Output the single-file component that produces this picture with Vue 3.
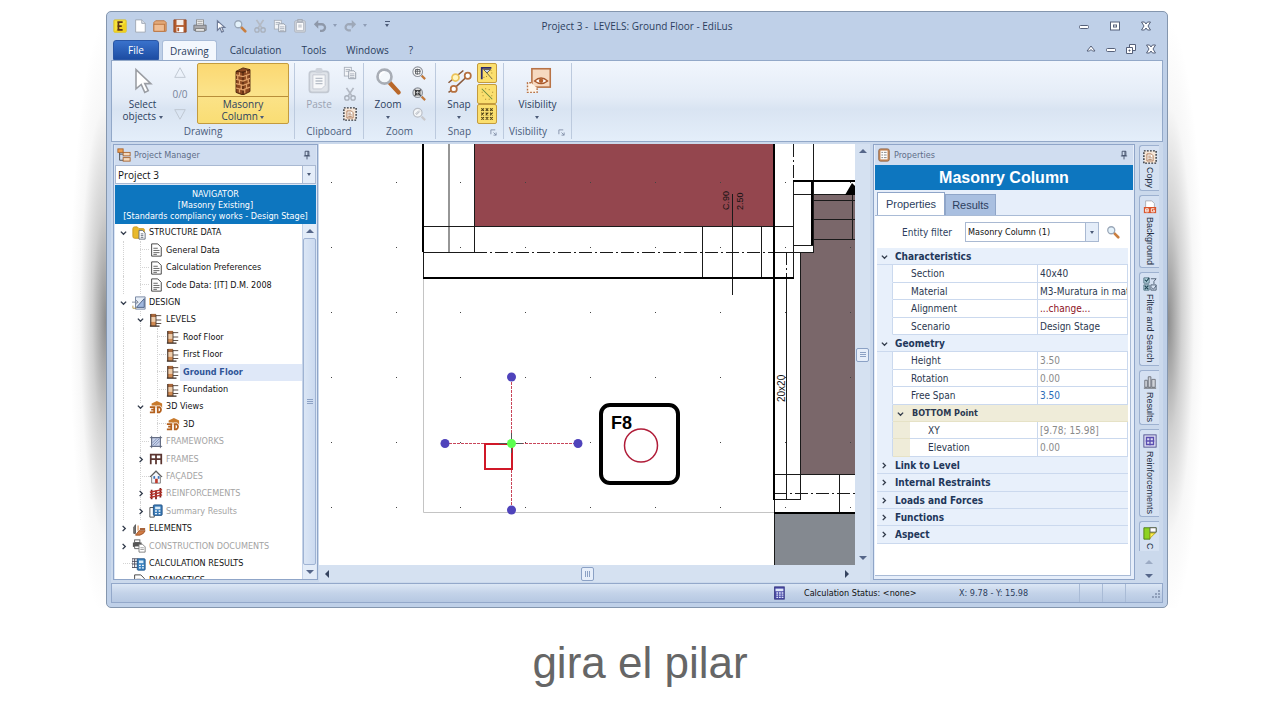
<script setup>
import { ref } from 'vue'

const icons = {
  logo: '<rect x="1" y="1" width="14" height="14" rx="1" fill="#f7e23c" stroke="#d9bd1a"/><path d="M1 15h14V3z" fill="#f0d020"/><path d="M5 3.500h6M5 8h5M5 12.500h6M6.200 3v10" stroke="#5d3414" stroke-width="2" fill="none"/>',
  page: '<path d="M3 1h7l4 4v10H3z" fill="#fff" stroke="#9aa3b0"/><path d="M10 1v4h4" fill="#dfe5ee" stroke="#9aa3b0"/>',
  folder: '<path d="M1 4l2-2h10l2 2v10H1z" fill="#e2a878" stroke="#b9713c"/><rect x="1" y="6" width="12" height="8" fill="#efbd93" stroke="#b9713c"/>',
  save: '<path d="M1 1h14v14H1z" fill="#b35a2c" stroke="#8f4520"/><rect x="4" y="1" width="8" height="6" fill="#f3ece8"/><rect x="4" y="9" width="8" height="6" fill="#fff"/><path d="M6 10v4" stroke="#b35a2c" stroke-width="2"/>',
  print: '<rect x="4" y="1" width="8" height="7" fill="#fff" stroke="#888"/><path d="M1 7h14v6H1z" fill="#a9a9ad" stroke="#6f7278"/><rect x="3" y="11" width="10" height="3" fill="#ececec" stroke="#777"/><path d="M5 3h6M5 5h6" stroke="#999"/>',
  cursor: '<path d="M5 2v11l3-3 2 5 2-1-2-4.500h3.500z" fill="#fff" stroke="#6d7a96" stroke-width="1.300"/>',
  glass: '<path d="M9 9l5 5" stroke="#c97e3f" stroke-width="3" stroke-linecap="round"/><circle cx="6" cy="6" r="4" fill="#e4f2fb" stroke="#9aa7b8" stroke-width="1.500"/>',
  cut: '<path d="M4 1l6 9M12 1L6 10" stroke="#b4bac4" stroke-width="2"/><circle cx="4.500" cy="12.500" r="2.500" fill="none" stroke="#a9b0bb" stroke-width="1.500"/><circle cx="11.500" cy="12.500" r="2.500" fill="none" stroke="#a9b0bb" stroke-width="1.500"/>',
  copy: '<rect x="1.500" y="1.500" width="8" height="10" fill="#f3f5f8" stroke="#a8afba"/><path d="M3 4h5M3 6h3" stroke="#a8afba"/><path d="M6.500 5.500h6l2 2v7h-8z" fill="#f3f5f8" stroke="#8f97a4"/><path d="M8 9h5M8 11h5M8 13h5" stroke="#a8afba"/>',
  paste: '<rect x="2" y="2" width="12" height="13" rx="1" fill="#d5d9df" stroke="#a9afb9"/><rect x="4" y="4" width="8" height="9" fill="#fbfbfc" stroke="#b7bcc6"/><rect x="5.500" y="0.500" width="5" height="3" fill="#c4c9d1" stroke="#a2a8b3"/><path d="M6 7h4M6 9h4" stroke="#a9afb9"/>',
  undo: '<path d="M5 6h5a3.500 3.500 0 0 1 0 7.500H8" fill="none" stroke="#8e98a9" stroke-width="2.600"/><path d="M6 1v10L1 6z" fill="#8e98a9"/>',
  redo: '<path d="M11 6H7a3.500 3.500 0 0 0-1 7h3" fill="none" stroke="#9ea8b8" stroke-width="2.600"/><path d="M10 1v10l5-5z" fill="#9ea8b8"/>',
  bigCursor: '<path d="M8 3v22l6-5 4 9 4-2-4-8h7z" fill="#fff" stroke="#9a9da3" stroke-width="1.800"/>',
  wall: '<path d="M8 5l8-4 8 2v25l-8 4-8-3z" fill="#8c4a22" stroke="#4d230c"/><path d="M16 5v27M8 5l8 1 8-3" stroke="#3d1906" fill="none"/><path d="M8 9l8 2 8-3M8 14l8 2 8-3M8 19l8 2 8-3M8 24l8 2 8-3M12 6v4M12 15v5M12 25v4M20 10v5M20 19v5M20 4v3M10 10v4M14 21v4M22 14v4M18 25v5" stroke="#e0a169" stroke-width="1.400" fill="none"/>',
  bigPaste: '<rect x="5" y="5" width="22" height="24" rx="3" fill="#dfe3e9" stroke="#c3c9d2" stroke-width="2"/><path d="M9 9h14v12l-4 4H9z" fill="#f7f8fa" stroke="#c2c7d0"/><rect x="12" y="1" width="8" height="6" rx="2" fill="#cfd4dc"/><path d="M12 13h8M12 16h8M12 19h8" stroke="#b8bec8" stroke-width="1.500"/>',
  copySel: '<rect x="1" y="1" width="14" height="14" fill="#f5e6d8" stroke="#30343c" stroke-width="1.600" stroke-dasharray="2 1.500"/><path d="M4.500 4.500h5l2 2v6h-7z" fill="#fff" stroke="#a8714b"/><path d="M6 7h3M6 9h4M6 11h4" stroke="#a8714b"/>',
  bigGlass: '<path d="M18 18l10 11" stroke="#b9682a" stroke-width="5" stroke-linecap="round"/><circle cx="12" cy="11" r="8" fill="#f4f8fb" stroke="#a8adb5" stroke-width="3"/><path d="M7 10a5 5 0 0 1 5-4" stroke="#fff" stroke-width="2" fill="none"/>',
  zoomBox: '<path d="M11 11l4 4" stroke="#c1793c" stroke-width="2.500"/><circle cx="6.500" cy="6.500" r="5.500" fill="#fff" stroke="#8e939c" stroke-width="1.300"/><path d="M4 4h5v5H4zM3 6h7M6 3v7" fill="none" stroke="#55585e" stroke-width="1"/>',
  zoomAll: '<path d="M11 11l4 4" stroke="#c1793c" stroke-width="2.500"/><circle cx="6.500" cy="6.500" r="5.500" fill="#ddd" stroke="#8e939c" stroke-width="1.300"/><path d="M3 3l3 3M10 3L7 6M3 10l3-3M10 10L7 7" stroke="#2e3034" stroke-width="1.200"/><rect x="4" y="4" width="5" height="5" fill="none" stroke="#333"/>',
  zoomPrev: '<path d="M11 11l4 4" stroke="#c9c9cc" stroke-width="2.500"/><circle cx="6.500" cy="6.500" r="5" fill="#f4f6f8" stroke="#b9bec6" stroke-width="1.300"/><path d="M4 8l4-4M5 9l4-4" stroke="#a8aeb8"/>',
  snap: '<path d="M4 18L21 4M10 25L26 10M4 29l6-4" stroke="#8a5a3c" stroke-width="1.800"/><circle cx="12" cy="12" r="4" fill="#fff6c0" stroke="#ecc35a" stroke-width="2"/><circle cx="26" cy="10" r="3.500" fill="#fff" stroke="#b5703f" stroke-width="2"/><circle cx="10" cy="25" r="3.500" fill="#fff" stroke="#b5703f" stroke-width="2"/>',
  snapA: '<path d="M2 15V2h11" stroke="#2c2a6e" stroke-width="2" fill="none"/><path d="M4 4h8L8 8zM7 7l7 8" fill="#c9d3e8" stroke="#55524a"/><path d="M12 5h1M13 8h1M7 12h1M4 13h1" stroke="#8a6d1c"/>',
  snapB: '<path d="M2 2l12 12" stroke="#6b8a3a" stroke-width="1.200"/><path d="M2 6h1M6 2h1M10 3h1M14 6h1M3 10h1M6 14h1M10 14h1M13 10h1" stroke="#8a6d1c" stroke-width="1"/>',
  snapC: '<path d="M1.500 1.500l3 3m0-3l-3 3M6.500 1.500l3 3m0-3l-3 3M11.500 1.500l3 3m0-3l-3 3M1.500 6.500l3 3m0-3l-3 3M6.500 6.500l3 3m0-3l-3 3M11.500 6.500l3 3m0-3l-3 3M1.500 11.500l3 3m0-3l-3 3M6.500 11.500l3 3m0-3l-3 3M11.500 11.500l3 3m0-3l-3 3" fill="none" stroke="#4a3c14" stroke-width="1.200"/>',
  visibility: '<rect x="9" y="2" width="21" height="21" fill="#f6d9c0" stroke="#b87346" stroke-width="1.800"/><path d="M8 18H4v11h11v-5" fill="#fdf4ea" stroke="#b87346" stroke-width="1.600" stroke-dasharray="2 1.600"/><path d="M12 16q7.500-7 15 0q-7.500 6-15 0z" fill="#fff" stroke="#a9592c" stroke-width="1.500"/><circle cx="19.500" cy="15.700" r="2.500" fill="#b5622f"/>',
  manager: '<path d="M3 5v9h4M3 7h4" stroke="#444" fill="none"/><rect x="1" y="1" width="6" height="4" fill="#f0a050" stroke="#a4602a"/><rect x="7" y="5" width="8" height="4" fill="#f7d9bb" stroke="#a4602a"/><rect x="7" y="11" width="8" height="4" fill="#f7d9bb" stroke="#a4602a"/>',
  pin: '<path d="M5 2h6v7H5zM3 9.500h10M8 10v5M9.500 2v7" fill="none" stroke="#3f4c66" stroke-width="1.400"/>',
  structure: '<path d="M1 3q0-2 2-2h3l2 2h5q1 0 1 1v9q0 1-1 1H3q-2 0-2-2z" fill="#e8b92d" stroke="#c7951a"/><path d="M8 5h4l3 3v7H8z" fill="#fff" stroke="#5a6474"/><path d="M10 9h3M10 11h3M10 13h3" stroke="#5a6474"/>',
  doc: '<path d="M3 1h7l4 4v10H3z" fill="#fff" stroke="#333"/><path d="M5 6h5M5 8.500h7M5 11h7M5 13h4" stroke="#555"/>',
  design: '<path d="M4 1h11v14H4z" fill="#e6edf7" stroke="#6e7f9c"/><path d="M5 13L14 3v10z" fill="#9fb7de" stroke="#44587d"/><path d="M0 7h7M4 4l3 3-3 3" stroke="#7b8494" fill="none"/><path d="M1 11v3h4" stroke="#b39347" fill="none"/>',
  level: '<path d="M2 1h6v4H2z" fill="#a8683c"/><path d="M2 5h6v5H2z" fill="#f0cda9"/><path d="M2 10h6v5H2z" fill="#d08a52"/><path d="M2 1v14M1 15h11" stroke="#3a2a20" stroke-width="1.200" fill="none"/><path d="M8 2v13M8 3h6M8 8h6M8 12h6" stroke="#4a3a30" fill="none"/>',
  d3: '<path d="M3 4l6-3 6 3v5H3z" fill="#c87a2c"/><path d="M1 8h5v6H1M2.500 11H6M10 8v6h2q3.500-3 0-6z" fill="#fff" stroke="#fff" stroke-width="3.500"/><path d="M1 8h5v6H1M2.500 11H6M10 8v6h2q3.500-3 0-6z" fill="none" stroke="#b4601c" stroke-width="2"/>',
  framework: '<path d="M3 3h10v10H3z" fill="#c9d3ea" stroke="#6d7b9b"/><path d="M3 1v14M13 1v14M1 3h14M1 13h14" stroke="#5b6478"/><path d="M4 9l5-5M4 12l8-8M7 12l5-5" stroke="#7c8db5"/>',
  frames: '<path d="M2 2v12M8 2v12M14 2v12M1 3h14M2 8h12" stroke="#5a3530" stroke-width="2" fill="none"/>',
  facade: '<path d="M1 8l7-7 7 7" stroke="#444" stroke-width="1.200" fill="none"/><path d="M3 7l5-5 5 5v8H3z" fill="#f3f6fb" stroke="#777"/><rect x="5" y="7" width="2" height="3" fill="#3a71b8"/><rect x="10" y="7" width="2" height="3" fill="#3a71b8"/><rect x="7" y="10" width="3" height="5" fill="#c0392b"/>',
  reinf: '<path d="M3 3v11M8 4v10M13 1v11" stroke="#7b1d18" stroke-width="2"/><path d="M1 6l14-3M1 9l14-3M1 12l14-3" stroke="#b8352c" stroke-width="1.600"/>',
  summary: '<path d="M1 4h5v11H1z" fill="#fff" stroke="#444"/><rect x="5" y="1" width="10" height="12" rx="1" fill="#3b7cb8" stroke="#204f82"/><path d="M7 3h6v3H7z" fill="#d9ecfa"/><path d="M7 8h2M11 8h2M7 11h2M11 11h2" stroke="#fff" stroke-width="1.500"/>',
  elements: '<path d="M2 13V6l2-3v10z" fill="#777" stroke="#555"/><path d="M4 15l4-5h7l-2 3-4 2z" fill="#d27d45" stroke="#9a4d20"/><path d="M6 4h2v6H6z" fill="#e6b48c"/><path d="M9 8h6" stroke="#9a4d20" stroke-width="2"/>',
  construct: '<rect x="3" y="1" width="6" height="3" fill="#fff" stroke="#555"/><rect x="1" y="4" width="10" height="5" fill="#555"/><path d="M3 8h6v3H3z" fill="#fff" stroke="#555"/><path d="M8 6h4l3 3v6H8z" fill="#fff" stroke="#777"/><path d="M9.500 10h4M9.500 12h4" stroke="#999"/>',
  calc: '<path d="M0 2h7v10H0zM0 5h7M0 8h7M3 2v10" fill="#fff" stroke="#445"/><rect x="6" y="2" width="9" height="13" rx="1" fill="#3b83c0" stroke="#1f5288"/><path d="M8 4h5v3H8z" fill="#d9ecfa"/><path d="M8 9.500h2M11.500 9.500h2M8 12.500h2M11.500 12.500h2" stroke="#fff" stroke-width="1.500"/>',
  props: '<rect x="2" y="1" width="12" height="14" rx="2" fill="#c98b5a" stroke="#8d6244"/><rect x="4" y="3" width="8" height="10" fill="#fff"/><path d="M5 5h2M5 8h2M5 11h2M8 5h3M8 8h3M8 11h3" stroke="#777"/>',
  bg: '<path d="M3 1h7l3 3v8H3z" fill="#fff" stroke="#a9a9b0"/><rect x="1" y="8" width="14" height="7" fill="#d9542b"/><path d="M3 10h3v3.500H3zM3 11.700h3M13 10H9.500v3.500H13v-1.700h-1.500" stroke="#fff" fill="none"/>',
  filter: '<path d="M1 1h6v6H1zM1 9h6v6H1z" fill="#bfe0ea" stroke="#4a6a7a"/><path d="M2 3l2 2 3-4M2 10l4 4M6 10l-4 4" stroke="#274b59" stroke-width="1.300" fill="none"/><path d="M9 2h6l-2.500 3v3M9 9h6v6H9zM10 12l2 2 3-4" stroke="#47586d" fill="none"/>',
  results: '<path d="M2 14V6h3v8zM6 14V2h3v12zM10 14V5h4v9z" fill="#cfd2d8" stroke="#6b6f77"/><path d="M1 15h14" stroke="#555"/>',
  rebar: '<rect x="1" y="1" width="14" height="14" fill="#dcdcf2" stroke="#4a4a8c"/><path d="M4 4h8v8H4zM8 3v10M3 8h10" fill="none" stroke="#5a4db0" stroke-width="1.500"/>',
  green: '<path d="M1 2h14v5H8v8H1z" fill="#8ed322" stroke="#4c7a12"/><path d="M8 2h7v5H8z" fill="#fff" stroke="#555"/><path d="M8 14V8h6z" fill="#fff04a" stroke="#a79a20"/>',
  statCalc: '<rect x="3" y="1" width="11" height="14" fill="#4a4aa8" stroke="#33337d"/><rect x="4" y="3" width="9" height="3" fill="#dfe6fa"/><path d="M5 8h8M5 10.500h8M5 13h8" stroke="#dfe6fa" stroke-width="1.500" stroke-dasharray="2 1"/>'
}

const closePath = 'M1.500 2h3L6 4l1.500-2h3L8 6l2.500 4h-3L6 8l-1.500 2h-3L4 6z'

const quick = [
  ['page', 'New'], ['folder', 'Open'], ['save', 'Save'], ['print', 'Print'], ['cursor', 'Select'],
  ['glass', 'Find'], ['cut', 'Cut'], ['copy', 'Copy'], ['paste', 'Paste']
]
const menu = ['Calculation', 'Tools', 'Windows', '?']

const tree = [
  { l: 0, e: 'open', i: 'structure', t: 'STRUCTURE DATA' },
  { l: 1, i: 'doc', t: 'General Data' },
  { l: 1, i: 'doc', t: 'Calculation Preferences' },
  { l: 1, i: 'doc', t: 'Code Data: [IT] D.M. 2008' },
  { l: 0, e: 'open', i: 'design', t: 'DESIGN' },
  { l: 1, e: 'open', i: 'level', t: 'LEVELS' },
  { l: 2, i: 'level', t: 'Roof Floor' },
  { l: 2, i: 'level', t: 'First Floor' },
  { l: 2, i: 'level', t: 'Ground Floor', sel: true },
  { l: 2, i: 'level', t: 'Foundation' },
  { l: 1, e: 'open', i: 'd3', t: '3D Views' },
  { l: 2, i: 'd3', t: '3D' },
  { l: 1, i: 'framework', t: 'FRAMEWORKS', dim: true },
  { l: 1, e: 'shut', i: 'frames', t: 'FRAMES', dim: true },
  { l: 1, i: 'facade', t: 'FAÇADES', dim: true },
  { l: 1, e: 'shut', i: 'reinf', t: 'REINFORCEMENTS', dim: true },
  { l: 1, e: 'shut', i: 'summary', t: 'Summary Results', dim: true },
  { l: 0, e: 'shut', i: 'elements', t: 'ELEMENTS' },
  { l: 0, e: 'shut', i: 'construct', t: 'CONSTRUCTION DOCUMENTS', dim: true },
  { l: 0, i: 'calc', t: 'CALCULATION RESULTS' },
  { l: 0, i: 'doc', t: 'DIAGNOSTICS' }
]

const rows = [
  { k: 'group', open: true, t: 'Characteristics' },
  { k: 'prop', t: 'Section', v: '40x40' },
  { k: 'prop', t: 'Material', v: 'M3-Muratura in mattoni' },
  { k: 'prop', t: 'Alignment', v: '...change...', c: 'wine' },
  { k: 'prop', t: 'Scenario', v: 'Design Stage' },
  { k: 'group', open: true, t: 'Geometry' },
  { k: 'prop', t: 'Height', v: '3.50', c: 'gray' },
  { k: 'prop', t: 'Rotation', v: '0.00', c: 'gray' },
  { k: 'prop', t: 'Free Span', v: '3.50', c: 'blue' },
  { k: 'subgroup', open: true, t: 'BOTTOM Point' },
  { k: 'nested', t: 'XY', v: '[9.78; 15.98]', c: 'gray' },
  { k: 'nested', t: 'Elevation', v: '0.00', c: 'gray' },
  { k: 'group', t: 'Link to Level' },
  { k: 'group', t: 'Internal Restraints' },
  { k: 'group', t: 'Loads and Forces' },
  { k: 'group', t: 'Functions' },
  { k: 'group', t: 'Aspect' }
]

const sideTabs = [
  ['copySel', 'Copy'], ['bg', 'Background'], ['filter', 'Filter and Search'],
  ['results', 'Results'], ['rebar', 'Reinforcements']
]

const gridX = [331, 396, 460, 525, 590, 655, 720, 785, 850]
const gridY = [182, 247, 312, 377, 442, 507]
const dashes = Array.from({ length: 33 }, (_, n) => n * 4)
const project = ref('Project 3')
const entity = ref('Masonry Column (1)')
</script>

<template>
  <div class="page">
    <div class="stage">
      <div class="window">
        <header class="titlebar">
          <svg class="i14" viewBox="0 0 16 16" v-html="icons.logo"></svg>
          <button v-for="q in quick" :key="q[0]" class="qb" :aria-label="q[1]">
            <svg class="i14" viewBox="0 0 16 16" v-html="icons[q[0]]"></svg>
          </button>
          <button class="qb" aria-label="Undo"><svg class="i14" viewBox="0 0 16 16" v-html="icons.undo"></svg></button>
          <i class="caret faint"></i>
          <button class="qb" aria-label="Redo"><svg class="i14" viewBox="0 0 16 16" v-html="icons.redo"></svg></button>
          <i class="caret faint"></i>
          <i class="caret bar"></i>
          <h1 class="title">Project 3 -&nbsp; LEVELS: Ground Floor - EdiLus</h1>
          <div class="winbtns">
            <button aria-label="Minimize"><svg viewBox="0 0 12 12"><rect x="1.500" y="5.500" width="9" height="3" rx="1" fill="#fff" stroke="#56617a" /></svg></button>
            <button aria-label="Maximize"><svg viewBox="0 0 12 12"><rect x="1.500" y="2" width="9" height="8" fill="#fff" stroke="#56617a" /><rect x="4.500" y="5" width="3" height="2" fill="#fff" stroke="#56617a" /></svg></button>
            <button aria-label="Close"><svg viewBox="0 0 12 12"><path :d="closePath" fill="#fff" stroke="#56617a" /></svg></button>
          </div>
        </header>

        <nav class="menubar">
          <button class="file">File</button>
          <button class="tab on">Drawing</button>
          <button v-for="m in menu" :key="m" class="tab">{{ m }}</button>
          <div class="mdibtns">
            <button aria-label="Collapse ribbon"><svg viewBox="0 0 12 12"><path d="M2 8l4-5 4 5H7.500L6 6.500 4.500 8z" fill="#fff" stroke="#56617a" /></svg></button>
            <button aria-label="Minimize view"><svg viewBox="0 0 12 12"><rect x="1.500" y="5.500" width="9" height="3" rx="1" fill="#fff" stroke="#56617a" /></svg></button>
            <button aria-label="Restore view"><svg viewBox="0 0 12 12"><path d="M4.500 1.500h6v6h-6z" fill="#fff" stroke="#56617a" /><path d="M1.500 4.500h6v6h-6z" fill="#fff" stroke="#56617a" /><path d="M4 7h1v1H4z" stroke="#56617a" /></svg></button>
            <button aria-label="Close view"><svg viewBox="0 0 12 12"><path :d="closePath" fill="#fff" stroke="#56617a" /></svg></button>
          </div>
        </nav>

        <section class="ribbon">
          <div class="group g-draw">
            <div class="tools">
              <button class="big w60"><svg class="i28" viewBox="0 0 32 32" v-html="icons.bigCursor"></svg><span>Select<br>objects <i class="caret"></i></span></button>
              <div class="stack">
                <button aria-label="Previous"><svg class="i14" viewBox="0 0 16 16"><path d="M2 13L8 2l6 11z" fill="none" stroke="#bcc3ce" /></svg></button>
                <span class="count">0/0</span>
                <button aria-label="Next"><svg class="i14" viewBox="0 0 16 16"><path d="M2 3l6 11 6-11z" fill="none" stroke="#bcc3ce" /></svg></button>
              </div>
              <button class="big hot"><svg class="i28" viewBox="0 0 32 32" v-html="icons.wall"></svg><span>Masonry<br>Column <i class="caret"></i></span></button>
            </div>
            <div class="glabel">Drawing</div>
          </div>
          <div class="group g-clip">
            <div class="tools">
              <button class="big w46 off"><svg class="i28" viewBox="0 0 32 32" v-html="icons.bigPaste"></svg><span>Paste</span></button>
              <div class="stack">
                <button aria-label="Copy"><svg class="i14" viewBox="0 0 16 16" v-html="icons.copy"></svg></button>
                <button aria-label="Cut"><svg class="i14" viewBox="0 0 16 16" v-html="icons.cut"></svg></button>
                <button aria-label="Copy selection"><svg class="i14" viewBox="0 0 16 16" v-html="icons.copySel"></svg></button>
              </div>
            </div>
            <div class="glabel">Clipboard</div>
          </div>
          <div class="group g-zoom">
            <div class="tools">
              <button class="big w46"><svg class="i28" viewBox="0 0 32 32" v-html="icons.bigGlass"></svg><span>Zoom<br><i class="caret"></i></span></button>
              <div class="stack">
                <button aria-label="Zoom window"><svg class="i14" viewBox="0 0 16 16" v-html="icons.zoomBox"></svg></button>
                <button aria-label="Zoom extents"><svg class="i14" viewBox="0 0 16 16" v-html="icons.zoomAll"></svg></button>
                <button aria-label="Zoom previous"><svg class="i14" viewBox="0 0 16 16" v-html="icons.zoomPrev"></svg></button>
              </div>
            </div>
            <div class="glabel">Zoom</div>
          </div>
          <div class="group g-snap">
            <div class="tools">
              <button class="big w40"><svg class="i28" viewBox="0 0 32 32" v-html="icons.snap"></svg><span>Snap<br><i class="caret"></i></span></button>
              <div class="stack snaps">
                <button aria-label="Object snap"><svg class="i14" viewBox="0 0 16 16" v-html="icons.snapA"></svg></button>
                <button aria-label="Grid line snap"><svg class="i14" viewBox="0 0 16 16" v-html="icons.snapB"></svg></button>
                <button aria-label="Grid snap"><svg class="i14" viewBox="0 0 16 16" v-html="icons.snapC"></svg></button>
              </div>
            </div>
            <div class="glabel launch">Snap<svg viewBox="0 0 8 8"><path d="M1 6V1h5M7 4v3H4M4 4l3 3" fill="none" stroke="#7f8da6" /></svg></div>
          </div>
          <div class="group g-vis">
            <div class="tools">
              <button class="big w66"><svg class="i28" viewBox="0 0 32 32" v-html="icons.visibility"></svg><span>Visibility<br><i class="caret"></i></span></button>
            </div>
            <div class="glabel launch">Visibility<svg viewBox="0 0 8 8"><path d="M1 6V1h5M7 4v3H4M4 4l3 3" fill="none" stroke="#7f8da6" /></svg></div>
          </div>
        </section>

        <main class="work">
          <aside class="manager">
            <div class="phead"><svg class="i14" viewBox="0 0 16 16" v-html="icons.manager"></svg><span>Project Manager</span><svg class="pin" viewBox="0 0 16 16" v-html="icons.pin"></svg></div>
            <div class="combo proj">
              <select v-model="project" aria-label="Project"><option>Project 3</option></select><i class="drop"><i class="caret"></i></i>
            </div>
            <div class="navi">NAVIGATOR<br>[Masonry Existing]<br>[Standards compliancy works - Design Stage]</div>
            <div class="treebox">
              <ul class="tree">
                <li v-for="n in tree" :key="n.t" :class="{ dim: n.dim, sel: n.sel }">
                  <span v-for="g in n.l" :key="g" class="guide"></span>
                  <span class="exp" :class="{ line: n.l > 0, tick: !n.e }">
                    <button v-if="n.e" :aria-label="'Toggle ' + n.t"><svg viewBox="0 0 8 8"><path :d="n.e === 'open' ? 'M1 3l3 3 3-3' : 'M3 1l3 3-3 3'" fill="none" stroke="#333c4c" stroke-width="1.600" /></svg></button>
                  </span>
                  <svg class="i14" viewBox="0 0 16 16" v-html="icons[n.i]"></svg>
                  <span class="tt">{{ n.t }}</span>
                </li>
              </ul>
              <div class="vbar"><button aria-label="Scroll up"><i class="tri up"></i></button><div class="thumb"><i class="grip"></i></div><button aria-label="Scroll down"><i class="tri down"></i></button></div>
            </div>
          </aside>

          <section class="view">
            <svg class="plan" viewBox="319 144 536 421" preserveAspectRatio="xMinYMin slice">
              <rect x="319" y="144" width="2000" height="1000" fill="#fff" />
              <rect x="474" y="144" width="300" height="82" fill="#94464e" />
              <path d="M800 252h13v-58h42v280h-55z" fill="#7a676a" />
              <rect x="774" y="513" width="81" height="60" fill="#848990" />
              <g fill="#444"><template v-for="x in gridX" :key="x"><rect v-for="y in gridY" :key="y" :x="x" :y="y" width="1" height="1" /></template></g>
              <path d="M423.500 279v233.500H774" stroke="#c4c4c4" fill="none" />
              <path d="M449 144v108" stroke="#969696" stroke-width="2" />
              <g stroke="#1a1a1a" fill="none">
                <path d="M474.500 144v108M423.500 252v26M423 226.500h370M423 252.500h51M702.500 227v51M761.500 227v51M732.500 194v101" />
                <path d="M793.500 180v98M813.500 144v108M793 194.500h62M793 245.500h20M774 252.500h40M813 200.500h42M813 219.500h42M813 239.500h42M852.500 185v54" />
                <path d="M786.500 278v222M800.500 252v248M774 474.500h81M774 499.500h27M839.500 474v39M774.500 500v65" />
                <path d="M474 252.500h300M774 493.500h81M786.500 252v26M793.500 144v36" stroke-dasharray="13 3 2 3" />
              </g>
              <path d="M423 144v108M423 278h371M774 144v356M793 181h62M812 181v64M774 513h81" stroke="#000" stroke-width="2" fill="none" />
              <path d="M852 183l-7 12h10v-9z" />
              <g class="cad">
                <text transform="translate(729 210) rotate(-90)" font-size="9">C.90</text>
                <text transform="translate(743 210) rotate(-90)" font-size="9">2.50</text>
                <text transform="translate(785 402) rotate(-90)" font-size="10">20x20</text>
              </g>
              <g fill="#c8465a">
                <template v-for="d in dashes" :key="d">
                  <rect :x="445 + d" y="443" width="3" height="1" />
                  <rect x="511" :y="378 + d" width="1" height="3" />
                </template>
              </g>
              <rect x="485" y="444" width="27" height="25" fill="none" stroke="#d01828" stroke-width="2" />
              <path d="M499 443.500h24M511.500 433v20" fill="none" stroke="#555" />
              <g fill="#4f43bb"><circle cx="511.500" cy="377" r="4.500" /><circle cx="511.500" cy="510" r="4.500" /><circle cx="445" cy="443.500" r="4.500" /><circle cx="578" cy="443.500" r="4.500" /></g>
              <circle cx="511.500" cy="443.500" r="4.500" fill="#5cff4e" />
              <rect x="601" y="405" width="77" height="78" rx="9" fill="#fff" stroke="#000" stroke-width="4" />
              <text class="key" x="611" y="429" font-size="18">F8</text>
              <circle cx="641" cy="445.500" r="16.500" fill="none" stroke="#b01c38" stroke-width="1.500" />
            </svg>
            <div class="vscroll"><button aria-label="Scroll view up"><i class="tri up"></i></button><i class="knob"><i class="grip"></i></i><button aria-label="Scroll view down"><i class="tri down"></i></button></div>
            <div class="hscroll"><button aria-label="Scroll view left"><i class="tri left"></i></button><i class="knob"><i class="grip side-grip"></i></i><button aria-label="Scroll view right"><i class="tri right"></i></button></div>
          </section>

          <aside class="props">
            <div class="phead"><svg class="i14" viewBox="0 0 16 16" v-html="icons.props"></svg><span>Properties</span><svg class="pin" viewBox="0 0 16 16" v-html="icons.pin"></svg></div>
            <h2>Masonry Column</h2>
            <div class="ptabs"><button class="on">Properties</button><button>Results</button></div>
            <div class="pbody">
              <div class="filter">
                <label for="entity">Entity filter</label>
                <div class="combo ent"><select id="entity" v-model="entity"><option>Masonry Column (1)</option></select><i class="drop"><i class="caret"></i></i></div>
                <button aria-label="Find entity" class="qb"><svg class="i14" viewBox="0 0 16 16" v-html="icons.glass"></svg></button>
              </div>
              <table>
                <colgroup><col class="c1"><col class="c2"><col class="c3"><col></colgroup>
                <tbody>
                  <tr v-for="r in rows" :key="r.t" :class="r.k">
                    <template v-if="r.k === 'group'">
                      <td class="tg"><button :aria-label="'Toggle ' + r.t"><svg viewBox="0 0 8 8"><path :d="r.open ? 'M1 3l3 3 3-3' : 'M2 1l3 3-3 3'" fill="none" stroke="#333c4c" stroke-width="1.600" /></svg></button></td>
                      <th colspan="3">{{ r.t }}</th>
                    </template>
                    <template v-else-if="r.k === 'subgroup'">
                      <td class="gut"></td>
                      <td class="tg"><button :aria-label="'Toggle ' + r.t"><svg viewBox="0 0 8 8"><path d="M1 3l3 3 3-3" fill="none" stroke="#333c4c" stroke-width="1.600" /></svg></button></td>
                      <th colspan="2">{{ r.t }}</th>
                    </template>
                    <template v-else>
                      <td class="gut"></td>
                      <td v-if="r.k === 'nested'" class="beige"></td>
                      <td class="name" :colspan="r.k === 'nested' ? 1 : 2">{{ r.t }}</td>
                      <td class="val" :class="r.c">{{ r.v }}</td>
                    </template>
                  </tr>
                </tbody>
              </table>
            </div>
          </aside>

          <nav class="side">
            <button v-for="s in sideTabs" :key="s[1]" class="stab"><svg class="i14" viewBox="0 0 16 16" v-html="icons[s[0]]"></svg><span>{{ s[1] }}</span></button>
            <button class="stab last"><svg class="i14" viewBox="0 0 16 16" v-html="icons.green"></svg><span>C</span></button>
            <div class="sarrows"><i class="tri up pale"></i><i class="tri down"></i></div>
          </nav>
        </main>

        <footer class="status">
          <svg class="i14" viewBox="0 0 16 16" v-html="icons.statCalc"></svg>
          <span class="calc">Calculation Status: &lt;none&gt;</span>
          <span class="xy">X: 9.78 - Y: 15.98</span>
          <span class="cell"></span><span class="cell"></span><span class="cell"></span>
          <svg class="size" viewBox="0 0 10 10"><path d="M8 1h2M8 4h2M8 7h2M5 4h2M5 7h2M2 7h2" stroke="#8f9fba" stroke-width="2" /></svg>
        </footer>
      </div>
    </div>
    <p class="caption">gira el pilar</p>
  </div>
</template>

<style>
body { background: #fff; }
</style>

<style scoped>
* { box-sizing: border-box; }
.page { height: 100vh; min-height: 480px; display: flex; flex-direction: column; padding-top: 11px; font-family: "Open Sans", "Noto Sans", sans-serif; font-size: 10px; color: #2c3e5e; }
button { font: inherit; color: inherit; background: none; border: 0; padding: 0; margin: 0; display: flex; align-items: center; justify-content: center; }
svg { display: block; flex: none; }
.i14 { width: 14px; height: 14px; }
.i28 { width: 28px; height: 28px; }
.stage { flex: 1; min-height: 0; margin: 0 112px 0 106px; position: relative; }
.stage::before, .stage::after { content: ""; position: absolute; top: 0; bottom: 0; width: 36px; }
.stage::before { right: 100%; background: radial-gradient(ellipse 100% 50% at 100% 52%, rgba(70,70,70,.62), rgba(90,90,90,.28) 38%, rgba(120,120,120,.06) 72%, transparent); }
.stage::after { left: 100%; background: radial-gradient(ellipse 100% 50% at 0 52%, rgba(70,70,70,.62), rgba(90,90,90,.28) 38%, rgba(120,120,120,.06) 72%, transparent); }
.window { height: 100%; display: flex; flex-direction: column; background: #bfd0e8; border: 1px solid #8496ae; border-radius: 5px; padding: 0 4px 4px; }

.titlebar { height: 27px; display: flex; align-items: center; gap: 6px; padding-left: 2px; position: relative; flex: none; }
.qb { width: 14px; height: 14px; }
.title { position: absolute; left: 0; right: 0; text-align: center; margin: 0; font-size: 10px; font-weight: 400; pointer-events: none; }
.winbtns, .mdibtns { margin-left: auto; display: flex; align-items: center; }
.winbtns { gap: 19px; padding-right: 11px; }
.mdibtns { gap: 8px; padding: 0 6px 5px 0; }
.winbtns svg, .mdibtns svg { width: 12px; height: 12px; }
.caret { display: inline-block; width: 0; height: 0; border: 2px solid transparent; border-top: 3px solid #4c5b78; border-bottom: 0; vertical-align: middle; }
.caret.faint { border-top-color: #8f9db5; }
.caret.bar { margin-left: 12px; position: relative; }
.caret.bar::before { content: ""; position: absolute; left: -2px; top: -6px; width: 5px; height: 1px; background: #4c5b78; }

.menubar { height: 21px; display: flex; flex: none; padding-left: 2px; align-items: flex-end; }
.tab { padding: 0 10px; height: 21px; }
.tab.on { background: #f3f7fd; border: 1px solid #a9bcd8; border-bottom: 0; border-radius: 3px 3px 0 0; padding: 0 7px; margin: 0 3px; height: 20px; }
.file { width: 46px; height: 20px; background: linear-gradient(#3a72cc, #1d4da3); color: #fff; border-radius: 3px 3px 0 0; border: 1px solid #2a56a5; }

.ribbon { height: 82px; flex: none; display: flex; background: linear-gradient(#f1f6fd, #e4ecf7 45%, #d9e4f2 60%, #e4eefa); border: 1px solid #92a8c8; padding-top: 2px; }
.group { border-right: 1px solid #bccade; margin-bottom: 2px; display: flex; flex-direction: column; }
.g-draw { width: 183px; } .g-clip { width: 69px; } .g-zoom { width: 72px; } .g-snap { width: 68px; } .g-vis { width: 68px; }
.tools { display: flex; flex: 1; }
.glabel { height: 16px; line-height: 14px; text-align: center; color: #4a5c7c; }
.launch { display: flex; justify-content: flex-end; gap: 19px; padding-right: 6px; }
.g-vis .launch { gap: 11px; }
.launch svg { width: 7px; height: 7px; margin-top: 5px; }
.big { flex-direction: column; justify-content: flex-start; line-height: 12px; text-align: center; padding-top: 4px; height: 61px; }
.big span { margin-top: 3px; }
.w60 { width: 61px; } .w46 { width: 48px; } .w40 { width: 46px; } .w66 { width: 67px; }
.off { color: #9aa3b2; }
.stack { display: flex; flex-direction: column; justify-content: space-between; align-items: center; width: 14px; padding: 3px 0; height: 61px; }
.count { color: #77839a; }
.g-draw .stack { margin-right: 10px; }
.hot { width: 92px; background: linear-gradient(#fbd872, #fbe38a 50%, #f9dd74); border: 1px solid #c39b3e; border-radius: 2px; padding-top: 3px; }
.hot span { border-top: 1px solid #b88e3a; width: 100%; margin-top: 1px; padding-top: 1px; }
.stack.snaps { width: 20px; padding: 0; margin-left: -5px; }
.snaps button { width: 20px; height: 20px; background: #fbdf6e; border: 1px solid #c39b3e; border-radius: 2px; }

.work { flex: 1; min-height: 0; display: flex; padding: 2px 0 1px; background: #cbd9ec; }
.manager { width: 205px; flex: none; border: 1px solid #8fa5c8; padding: 0 1px; display: flex; flex-direction: column; margin: 0 0 2px 2px; background: #dbe6f5; }
.phead { height: 20px; flex: none; display: flex; align-items: center; gap: 3px; padding: 0 4px 0 2px; font-size: 9px; font-family: "DejaVu Sans Condensed", "DejaVu Sans", sans-serif; color: #5e6d88; background: #d0ddf0; }
.pin { width: 10px; height: 10px; margin-left: auto; }
.combo { position: relative; display: flex; background: #fff; border: 1px solid #a9b9d2; }
.combo select { appearance: none; flex: 1; border: 0; background: none; padding: 0 2px; margin: 0; color: #111; font: 10px "Open Sans", sans-serif; outline: 0; min-width: 0; }
.drop { flex: none; width: 13px; border-left: 1px solid #a9b9d2; background: #e4edf9; display: flex; align-items: center; justify-content: center; pointer-events: none; }
.proj { height: 19px; flex: none; }
.navi { background: #0d76bf; color: #fff; text-align: center; height: 39px; flex: none; margin-top: 1px; padding-top: 4px; font: 9px/11px "DejaVu Sans Condensed", "DejaVu Sans", sans-serif; white-space: nowrap; }
.treebox { flex: 1; min-height: 0; display: flex; background: #fff; overflow: hidden; }
.tree { list-style: none; margin: 0; padding: 0; flex: 1; min-width: 0; font: 9px "DejaVu Sans Condensed", "DejaVu Sans", sans-serif; color: #111; }
.tree li { height: 17px; display: flex; align-items: center; white-space: nowrap; }
.tree li:nth-child(5n + 2), .tree li:nth-child(5n + 4) { height: 18px; }
.guide, .exp { width: 17px; align-self: stretch; display: flex; align-items: center; justify-content: center; flex: none; position: relative; }
.guide::before, .exp.line::before { content: ""; position: absolute; left: 8px; top: 0; bottom: 0; border-left: 1px dotted #d3d3d3; }
.exp.tick::after { content: ""; position: absolute; left: 8px; right: 0; top: 8px; border-top: 1px dotted #d3d3d3; }
.exp button { background: #fff; position: relative; }
.exp svg { width: 7px; height: 7px; }
.tt { padding: 0 2px 0 3px; height: 17px; line-height: 17px; }
.dim .tt { color: #a3a3a3; }
.sel .tt { background: #dfe8f8; color: #2f5597; font-weight: 700; flex: 1; }
.vbar { width: 14px; background: #e3ecf8; display: flex; flex-direction: column; border-left: 1px solid #c5d3e8; }
.vbar button, .vscroll button { height: 14px; width: 100%; }
.thumb { flex: 1; background: linear-gradient(90deg, #dbe6f5, #cbdaf0); border: 1px solid #9fb3d3; border-radius: 2px; display: flex; align-items: center; justify-content: center; }
.tri { display: block; width: 0; height: 0; border: 4px solid transparent; }
.tri.up { border-bottom-color: #56678a; border-top: 0; }
.tri.down { border-top-color: #56678a; border-bottom: 0; }
.tri.left { border-right-color: #34435f; border-left: 0; }
.tri.right { border-left-color: #34435f; border-right: 0; }
.tri.pale { opacity: .4; }
.grip { width: 6px; height: 5px; border-top: 1px solid #8ca1c4; border-bottom: 1px solid #8ca1c4; background: linear-gradient(transparent 33%, #8ca1c4 33%, #8ca1c4 67%, transparent 67%); }
.side-grip { width: 5px; height: 6px; border: 0; border-left: 1px solid #8ca1c4; border-right: 1px solid #8ca1c4; background: linear-gradient(90deg, transparent 33%, #8ca1c4 33%, #8ca1c4 67%, transparent 67%); }

.view { flex: 1; min-width: 0; display: grid; grid-template-columns: 1fr 15px; grid-template-rows: 1fr 17px; margin-left: 1px; background: #d5e1f1; overflow: hidden; }
.plan { width: 100%; height: 100%; min-height: 0; min-width: 0; grid-area: 1 / 1; }
.vscroll { grid-area: 1 / 2; display: flex; flex-direction: column; justify-content: space-between; align-items: center; }
.hscroll { grid-area: 2 / 1; display: flex; justify-content: space-between; align-items: center; }
.hscroll button { width: 16px; height: 17px; }
.knob { width: 13px; height: 14px; border: 1px solid #8ba1c5; border-radius: 2px; background: #e6eefa; display: flex; align-items: center; justify-content: center; }
.cad { font-family: "Liberation Sans", Arial, sans-serif; fill: #111; }
.key { font-family: "Liberation Sans", Arial, sans-serif; font-weight: 700; fill: #000; }

.props { width: 262px; flex: none; margin: 0 0 2px 3px; border: 1px solid #8fa5c8; background: #e6eefa; padding: 0 1px 3px; display: flex; flex-direction: column; }
.props h2 { margin: 0; height: 25px; flex: none; background: #0d76bf; color: #fff; text-align: center; font: 700 16px/25px "Liberation Sans", Arial, sans-serif; }
.ptabs { display: flex; align-items: flex-end; height: 25px; flex: none; padding-left: 2px; font: 11px "Liberation Sans", Arial, sans-serif; }
.ptabs button { width: 51px; height: 21px; background: #a9bfe0; border: 1px solid #8fa5c8; border-bottom: 0; }
.ptabs .on { width: 68px; height: 23px; background: #fff; }
.pbody { flex: 1; min-height: 0; background: #fff; border: 1px solid #a9bbd6; border-width: 1px 1px 1px 0; margin: 0 2px 0 0; padding: 0 2px; overflow: hidden; }
.filter { display: flex; align-items: center; height: 32px; padding-left: 25px; font: 10px "DejaVu Sans Condensed", "DejaVu Sans", sans-serif; }
.filter .combo { width: 134px; height: 20px; margin: 0 7px 0 13px; }
.filter label { white-space: nowrap; }
.filter select { font-size: 9px; font-family: "DejaVu Sans Condensed", "DejaVu Sans", sans-serif; }
table { width: 100%; table-layout: fixed; border-collapse: separate; border-spacing: 0; font: 10px "DejaVu Sans Condensed", "DejaVu Sans", sans-serif; color: #2b3850; }
.c1 { width: 16px; } .c2 { width: 17px; } .c3 { width: 128px; }
tr { height: 17px; }
tr:nth-child(5n + 2), tr:nth-child(5n + 4) { height: 18px; }
td, th { padding: 0; border-bottom: 1px solid #cbd9ee; text-align: left; white-space: nowrap; overflow: hidden; line-height: 15px; }
tr.group { display: table-row; margin: 0; background: #e8f0fb; }
.group th { padding-left: 2px; color: #22375a; }
.gut { background: #e8f0fb; border-bottom-color: #e8f0fb; border-right: 1px solid #cbd9ee; }
.tg button { width: 15px; height: 15px; }
.tg svg { width: 7px; height: 7px; }
.subgroup th, .subgroup .tg, .beige { background: #efecd9; font-size: 9px; border-bottom-color: #e6e2c6; }
.subgroup th { padding-left: 2px; }
.name { padding-left: 18px; border-right: 1px solid #cbd9ee; }
.val { padding-left: 2px; border-right: 1px solid #cbd9ee; }
.gray { color: #8a8a8a; }
.wine { color: #8c1024; }
.blue { color: #2b6cb8; }

.side { width: 28px; flex: none; padding: 1px 0 0 4px; display: flex; flex-direction: column; gap: 4px; overflow: hidden; }
.stab { flex: none; width: 20px; flex-direction: column; justify-content: flex-start; gap: 3px; padding: 4px 0 2px; border: 1px solid #9db1d0; border-right: 0; border-radius: 3px 0 0 3px; background: #d5e1f2; color: #222d42; }
.stab span { writing-mode: vertical-rl; font: 9px/14px "Liberation Sans", Arial, sans-serif; }
.stab.last { border-bottom: 0; border-radius: 3px 0 0; }
.sarrows { margin-top: 5px; display: flex; flex-direction: column; gap: 10px; align-items: center; width: 20px; }

.status { height: 20px; flex: none; border: 1px solid #93a8ca; background: linear-gradient(#dce7f5, #c4d3e9 50%, #b6c8e2); display: flex; align-items: center; justify-content: flex-end; color: #2c3e5e; font: 9px "DejaVu Sans Condensed", "DejaVu Sans", sans-serif; }
.calc { color: #111; margin-left: 18px; width: 155px; white-space: nowrap; }
.xy { width: 120px; }
.cell { width: 23px; align-self: stretch; border-left: 1px solid #a9bbd6; }
.size { width: 10px; height: 10px; align-self: flex-end; margin: 0 2px 2px; }

.caption { margin: 0; height: 112px; flex: none; text-align: center; font: 44px/110px "Liberation Sans", Helvetica, Arial, sans-serif; color: #666; }
</style>
